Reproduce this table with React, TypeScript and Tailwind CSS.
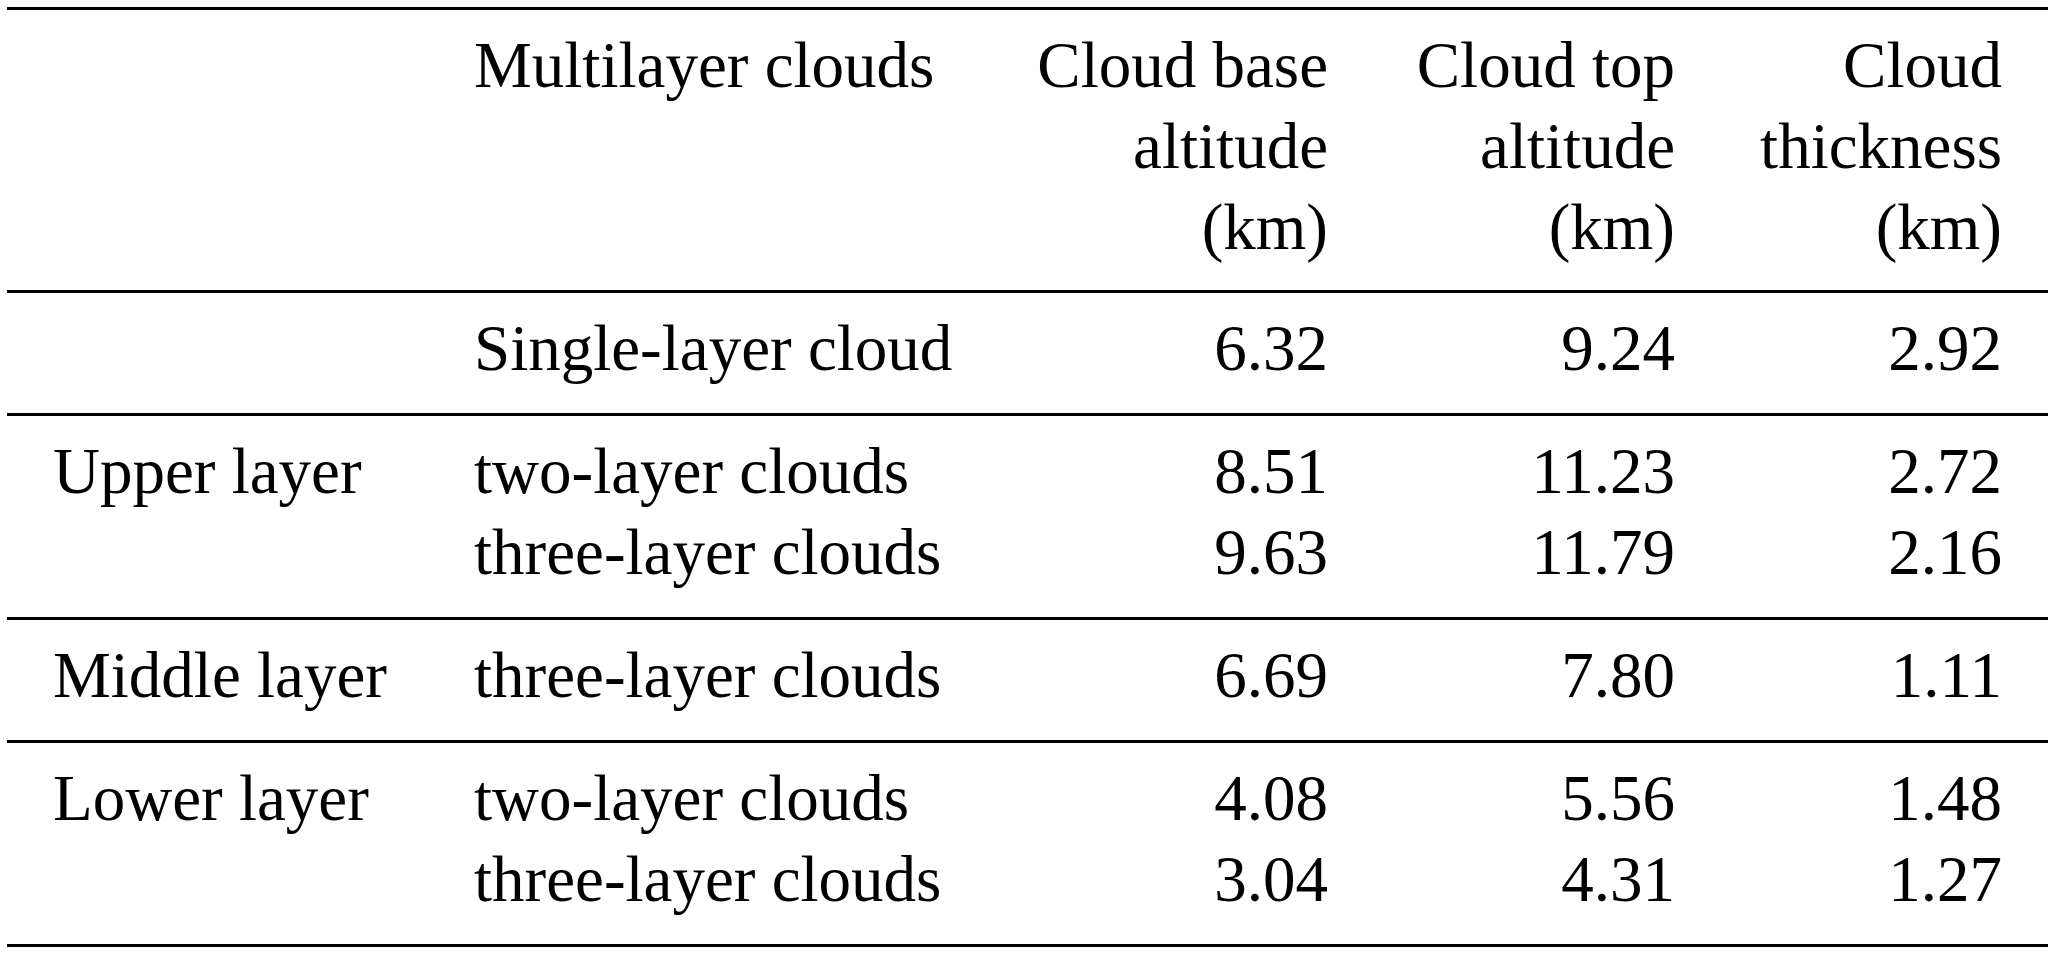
const groups = [
  {
    label: "",
    rows: [["Single-layer cloud", "6.32", "9.24", "2.92"]],
  },
  {
    label: "Upper layer",
    rows: [
      ["two-layer clouds", "8.51", "11.23", "2.72"],
      ["three-layer clouds", "9.63", "11.79", "2.16"],
    ],
  },
  {
    label: "Middle layer",
    rows: [["three-layer clouds", "6.69", "7.80", "1.11"]],
  },
  {
    label: "Lower layer",
    rows: [
      ["two-layer clouds", "4.08", "5.56", "1.48"],
      ["three-layer clouds", "3.04", "4.31", "1.27"],
    ],
  },
];

const cols =
  "grid grid-cols-[467px_526px_328px_347px_373px] leading-[81px]";

const App = () => {
  return (
    <div
      className="bg-white min-h-screen pt-[7px] pl-[7px] text-black text-[65px]"
      style={{ fontFamily: '"Liberation Serif", "Times New Roman", serif' }}
    >
      <div className="w-[2041px] border-b-[3px] border-black">
        <div className={cols + " border-t-[3px] border-black pt-[15px] pb-[22px]"}>
          <div className="pl-[46px]"></div>
          <div>Multilayer clouds</div>
          <div className="text-right">
            <div>Cloud base</div>
            <div>altitude</div>
            <div>(km)</div>
          </div>
          <div className="text-right">
            <div>Cloud top</div>
            <div>altitude</div>
            <div>(km)</div>
          </div>
          <div className="text-right pr-[46px]">
            <div>Cloud</div>
            <div>thickness</div>
            <div>(km)</div>
          </div>
        </div>

        {groups.map((g, i) => (
          <div
            key={i}
            className={cols + " border-t-[3px] border-black pt-[15px] pb-[24px]"}
          >
            <div className="pl-[46px]">{g.label}</div>
            <div>
              {g.rows.map((r, j) => (
                <div key={j}>{r[0]}</div>
              ))}
            </div>
            <div className="text-right">
              {g.rows.map((r, j) => (
                <div key={j}>{r[1]}</div>
              ))}
            </div>
            <div className="text-right">
              {g.rows.map((r, j) => (
                <div key={j}>{r[2]}</div>
              ))}
            </div>
            <div className="text-right pr-[46px]">
              {g.rows.map((r, j) => (
                <div key={j}>{r[3]}</div>
              ))}
            </div>
          </div>
        ))}
      </div>
    </div>
  );
};

export default App;
